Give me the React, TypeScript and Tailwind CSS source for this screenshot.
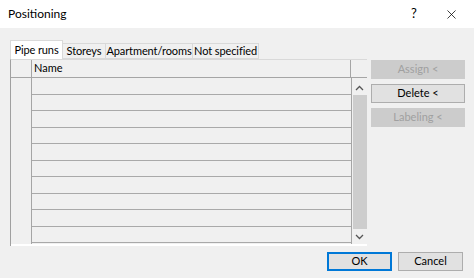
import { X } from 'lucide-react'

const tabs = ['Pipe runs', 'Storeys', 'Apartment/rooms', 'Not specified']
const tabWidths = ['w-[53px]', 'w-[44px]', 'w-[88px]', 'w-[67px]']
const rows = Array.from({ length: 10 })

function SideButton({ label, enabled }: { label: string; enabled?: boolean }) {
  return (
    <div
      className={`h-[19px] w-[94px] flex items-center justify-center text-[11px] border ${
        enabled ? 'bg-[#e1e1e1] border-[#adadad] text-black' : 'bg-[#cccccc] border-[#cccccc] text-[#a0a0a0]'
      }`}
    >
      {label}
    </div>
  )
}

export default function App() {
  return (
    <div
      className="w-[474px] h-[278px] flex flex-col bg-[#f0f0f0] overflow-hidden text-black"
      style={{ fontFamily: 'Lato, "Noto Sans", sans-serif' }}
    >
      {/* Title bar */}
      <div className="h-[28px] bg-white flex items-center pl-[8px] shrink-0">
        <span className="text-[12px] flex-1">Positioning</span>
        <span className="text-[13px] w-[20px] text-center mr-[20px]">?</span>
        <X className="w-[15px] h-[15px] mr-[15px]" strokeWidth={1.2} />
      </div>

      <div className="flex-1 flex flex-col pl-[10px] pt-[12px]">
        {/* Tabs */}
        <div className="flex items-end h-[19px]">
          {tabs.map((t, i) => (
            <div
              key={t}
              className={`${tabWidths[i]} flex items-center justify-center whitespace-nowrap text-[11px] tracking-[-0.1px] border border-[#d9d9d9] ${
                i === 0 ? 'h-[19px] bg-white border-b-0 z-10' : 'h-[16px] bg-[#f0f0f0] -ml-px'
              }`}
            >
              {t}
            </div>
          ))}
        </div>

        <div className="flex gap-[4px]">
          {/* Grid */}
          <div className="w-[357px] h-[187px] border-l border-[#a0a0a0] border-t border-t-[#d9d9d9] flex flex-col bg-[#f0f0f0]">
            {/* Header */}
            <div className="h-[18px] flex border-b border-[#a5a5a5] shrink-0">
              <div className="w-[21px] border-r border-[#a5a5a5]" />
              <div className="w-[319px] border-r border-[#a5a5a5] text-[11px] pl-[2px] flex items-center">Name</div>
              <div className="flex-1" />
            </div>
            <div className="flex flex-1">
              <div className="w-[21px] border-r border-[#a5a5a5]" />
              <div className="w-[319px] flex flex-col">
                {rows.map((_, i) => (
                  <div key={i} className="h-[16.5px] border-b border-[#a9a9a9] shrink-0" />
                ))}
              </div>
              {/* Scrollbar */}
              <div className="flex-1 border-l border-[#a5a5a5] flex flex-col items-center">
                <svg width="9" height="6" viewBox="0 0 9 6" className="mt-[7px]">
                  <path d="M1 5 L4.5 1.5 L8 5" fill="none" stroke="#555" strokeWidth="1.3" />
                </svg>
                <div className="w-[14px] h-[134px] bg-[#cdcdcd] mt-[4px]" />
                <svg width="9" height="6" viewBox="0 0 9 6" className="mt-[5px]">
                  <path d="M1 1 L4.5 4.5 L8 1" fill="none" stroke="#555" strokeWidth="1.3" />
                </svg>
              </div>
            </div>
            <div className="h-[2px] bg-white shrink-0" />
          </div>

          {/* Side buttons */}
          <div className="flex flex-col gap-[5px] pt-[1px]">
            <SideButton label="Assign <" />
            <SideButton label="Delete <" enabled />
            <SideButton label="Labeling <" />
          </div>
        </div>

        {/* Footer */}
        <div className="flex justify-end gap-[6px] pr-[11px] mt-[6px]">
          <div className="w-[65px] h-[19px] border border-[#0078d7] bg-[#e1e1e1] flex items-center justify-center text-[11px] shadow-[inset_0_0_0_1px_#0078d7]">
            OK
          </div>
          <div className="w-[65px] h-[19px] border border-[#adadad] bg-[#e1e1e1] flex items-center justify-center text-[11px]">
            Cancel
          </div>
        </div>
      </div>
    </div>
  )
}
